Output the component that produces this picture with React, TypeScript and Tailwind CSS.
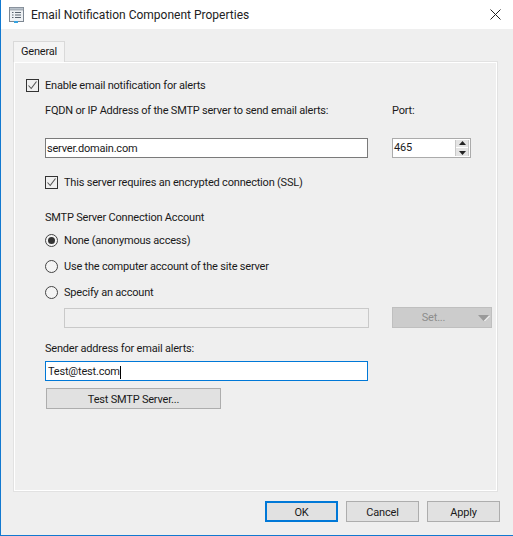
import type { ReactNode } from "react";

const FONT = "font-['Roboto','Open_Sans',sans-serif]";

function CheckBox({ label }: { label: string }) {
  return (
    <div className="flex items-center h-[14px]">
      <div className="w-[13px] h-[13px] border border-[#333] bg-[#f0f0f0] flex items-center justify-center">
        <svg width="11" height="11" viewBox="0 0 11 11" fill="none">
          <path d="M1.5 5.5 L4.2 8.5 L9.5 1.5" stroke="#555" strokeWidth="1.1" />
        </svg>
      </div>
      <span className="ml-[6px] mt-[2px] whitespace-nowrap">{label}</span>
    </div>
  );
}

function Radio({ label, checked }: { label: string; checked?: boolean }) {
  return (
    <div className="flex items-center h-[14px]">
      <div className="w-[13px] h-[13px] rounded-full border border-[#444] bg-[#f4f4f4] flex items-center justify-center">
        {checked && <div className="w-[7px] h-[7px] rounded-full bg-[#333]" />}
      </div>
      <span className="ml-[6px] mt-[2px] whitespace-nowrap">{label}</span>
    </div>
  );
}

function Btn({ className, children }: { className: string; children: ReactNode }) {
  return (
    <div className={`h-[21px] bg-[#e1e1e1] pt-[2px] flex items-center justify-center ${className}`}>
      {children}
    </div>
  );
}

export default function App() {
  return (
    <div className={`w-[513px] h-[536px] overflow-hidden bg-[#efefef] border-l border-b border-[#1279d0] flex flex-col text-[11px] leading-[14px] tracking-[-0.2px] text-[#1a1a1a] ${FONT}`}>
      <header className="h-[29px] shrink-0 bg-white flex items-center pl-[8px] pr-[12px]">
        <svg width="15" height="16" viewBox="0 0 15 16" fill="none">
          <rect x="0.5" y="0.5" width="14" height="14" fill="#eef1f4" stroke="#7d8792" />
          <rect x="0.5" y="0.5" width="14" height="2.5" fill="#b9c2cb" stroke="#7d8792" strokeWidth="0.6" />
          <path d="M3 5.5h1.5M6 5.5h6M3 8h1.5M6 8h6M3 10.5h1.5M6 10.5h6" stroke="#59636e" />
          <rect x="5" y="14" width="4" height="2" fill="#35a3e0" />
        </svg>
        <span className="ml-[7px] text-[12px] tracking-normal text-[#222] whitespace-nowrap">Email Notification Component Properties</span>
        <svg className="ml-auto" width="11" height="11" viewBox="0 0 11 11" fill="none">
          <path d="M0.5 0.5 L10.5 10.5 M10.5 0.5 L0.5 10.5" stroke="#222" strokeWidth="1" />
        </svg>
      </header>

      <div className="pl-[12px] pt-[12px] w-[497px]">
        <div className="relative z-10 w-[52px] h-[21px] bg-[#f4f4f4] border border-b-0 border-[#d9d9d9] flex items-center justify-center">
          General
        </div>
        <section className="-mt-px h-[431px] border-2 border-[#e2e2e2] outline outline-white -outline-offset-2 pt-[15px] pl-[11px]">
          <CheckBox label="Enable email notification for alerts" />

          <div className="ml-[19px]">
            <div className="mt-[11px] pt-px flex h-[14px]">
              <span className="w-[347px] whitespace-nowrap">FQDN or IP Address of the SMTP server to send email alerts:</span>
              <span>Port:</span>
            </div>
            <div className="mt-[21px] flex">
              <div className="w-[323px] h-[20px] bg-white border border-[#7a7a7a] pl-[1px] pt-[2px] flex items-center">server.domain.com</div>
              <div className="ml-[24px] w-[79px] h-[20px] bg-white border border-[#ababab] pl-[1px] flex items-center justify-between pr-[1px]">
                <span>465</span>
                <div className="w-[14px] h-[16px] bg-[#e4e4e4] border-x border-[#c8c8c8] flex flex-col items-center justify-around">
                  <svg width="7" height="4" viewBox="0 0 7 4"><path d="M3.5 0 L7 4 H0 Z" fill="#222" /></svg>
                  <div className="w-full h-px bg-white" />
                  <svg width="7" height="4" viewBox="0 0 7 4"><path d="M0 0 H7 L3.5 4 Z" fill="#222" /></svg>
                </div>
              </div>
            </div>

            <div className="mt-[17px]">
              <CheckBox label="This server requires an encrypted connection (SSL)" />
            </div>

            <div className="mt-[21px] pt-px h-[14px] whitespace-nowrap">SMTP Server Connection Account</div>
            <div className="mt-[9px] flex flex-col gap-[12px]">
              <Radio checked label="None (anonymous access)" />
              <Radio label="Use the computer account of the site server" />
              <Radio label="Specify an account" />
            </div>

            <div className="mt-[8px] flex items-center">
              <div className="ml-[19px] w-[305px] h-[20px] bg-[#efefef] border border-[#c9c9c9]" />
              <div className="ml-[23px] w-[100px] h-[21px] bg-[#cccccc] border border-[#bfbfbf] relative flex items-center justify-center text-[#8c8c8c]">
                <span className="mr-[17px]">Set...</span>
                <svg className="absolute right-[1px] top-[7px]" width="12" height="7" viewBox="0 0 12 7">
                  <path d="M0 0 H11 L5.5 6 Z" fill="#9a9a9a" />
                  <path d="M6.5 6 L11.5 1" stroke="#fff" strokeWidth="1" />
                </svg>
              </div>
            </div>

            <div className="mt-[13px] pt-px h-[14px] whitespace-nowrap">Sender address for email alerts:</div>
            <div className="mt-[6px] w-[323px] h-[20px] bg-white border border-[#0078d7] pl-[2px] pt-[2px] flex items-center">
              <span>Test@test.com</span>
              <span className="w-px h-[13px] bg-black" />
            </div>
            <Btn className="mt-[7px] ml-[1px] w-[175px] border border-[#adadad]">Test SMTP Server...</Btn>
          </div>
        </section>
      </div>

      <footer className="mt-[9px] pl-[264px] flex gap-[8px]">
        <Btn className="w-[73px] border-2 border-[#0078d7]">OK</Btn>
        <Btn className="w-[73px] border border-[#adadad]">Cancel</Btn>
        <Btn className="w-[73px] border border-[#adadad]">Apply</Btn>
      </footer>
    </div>
  );
}
